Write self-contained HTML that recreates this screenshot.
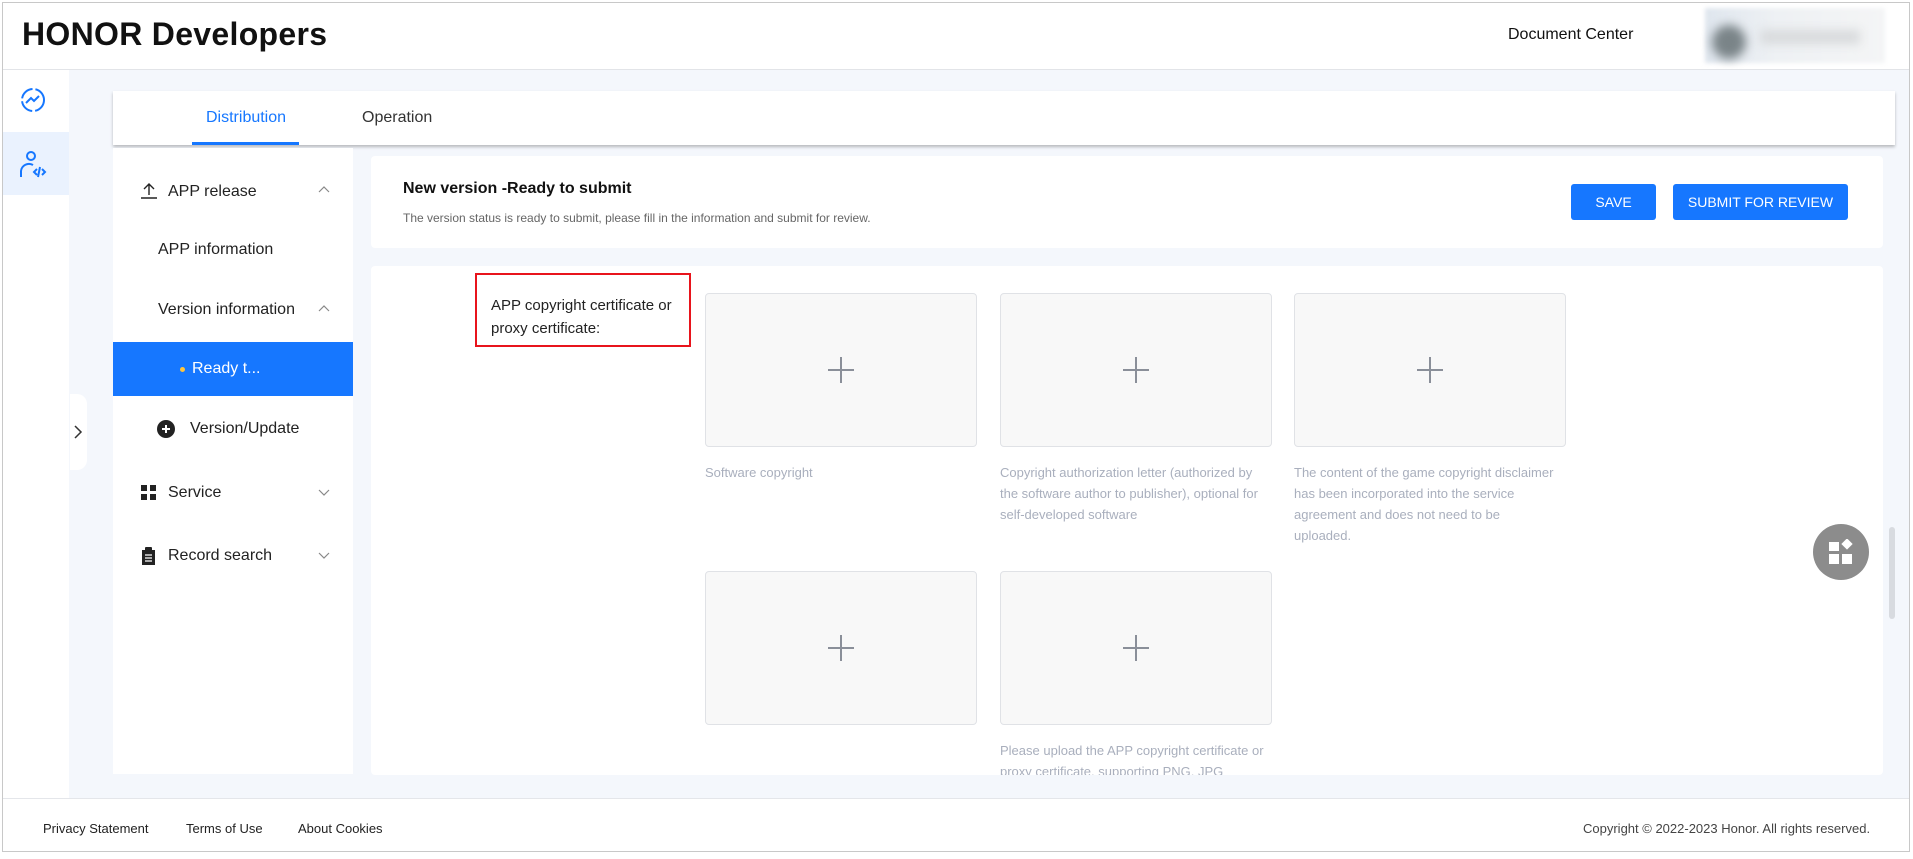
<!DOCTYPE html>
<html><head><meta charset="utf-8"><style>
*{box-sizing:border-box;margin:0;padding:0}
body{width:1913px;height:859px;overflow:hidden;background:#fff;font-family:"Liberation Sans",Arial,sans-serif;position:relative;color:#222}
.a{position:absolute}
.frame{left:2px;top:2px;width:1908px;height:850px;border:1px solid #c8c8c8}
.box{background:#f8f8f8;border:1px solid #e0e2e6;border-radius:4px}
.plus{position:absolute;left:50%;top:50%;width:26px;height:26px;margin:-13px 0 0 -13px}
.plus:before,.plus:after{content:"";position:absolute;background:#8a8f99}
.plus:before{left:12px;top:0;width:2px;height:26px}
.plus:after{top:12px;left:0;height:2px;width:26px}
.cap{color:#a9afbd;font-size:13px;line-height:21px;width:268px}
.mi{font-size:16px;color:#222}
.btn{background:#1677ff;color:#fff;font-size:14px;border-radius:3px;text-align:center;line-height:36px}
</style></head><body>
<div class="a frame"></div>
<div class="a" style="left:22px;top:16px;font-size:32px;font-weight:bold;color:#111;letter-spacing:0.3px">HONOR Developers</div>
<div class="a" style="left:1508px;top:26px;font-size:16px;color:#111">Document Center</div>
<div class="a" style="left:1705px;top:8px;width:180px;height:55px;background:linear-gradient(90deg,#dfe6ee,#eef1f4 40%,#f4f5f6);filter:blur(2px)"></div>
<div class="a" style="left:1712px;top:25px;width:34px;height:34px;border-radius:50%;background:#7a8488;filter:blur(5px)"></div>
<div class="a" style="left:1760px;top:30px;width:100px;height:14px;background:#d8dadc;filter:blur(5px)"></div>
<div class="a" style="left:3px;top:69px;width:1906px;height:1px;background:#e2e4e8"></div>
<div class="a" style="left:69px;top:70px;width:1840px;height:728px;background:#f4f7fc"></div>
<div class="a" style="left:3px;top:70px;width:66px;height:728px;background:#fff"></div>
<div class="a" style="left:3px;top:132px;width:66px;height:63px;background:#eaf2fe"></div>
<svg class="a" style="left:19px;top:86px" width="28" height="28" viewBox="0 0 28 28" fill="none" stroke="#1677ff" stroke-width="2"><circle cx="14" cy="14" r="11" stroke-dasharray="15 3"/><path d="M7 17l5-5 3 3 5-5"/></svg>
<svg class="a" style="left:19px;top:150px" width="30" height="30" viewBox="0 0 30 30" fill="none" stroke="#1677ff" stroke-width="2"><circle cx="12" cy="6" r="4"/><path d="M2 27v-6a8 8 0 0 1 12-6"/><path d="M18 19l-3 3 3 3M23 19l3 3-3 3M21 17l-2 10"/></svg>
<div class="a" style="left:70px;top:394px;width:17px;height:76px;background:#fff;border-radius:0 10px 10px 0"></div>
<svg class="a" style="left:73px;top:424px" width="10" height="16" viewBox="0 0 10 16" fill="none" stroke="#333" stroke-width="1.5"><path d="M2 2l6 6-6 6"/></svg>
<div class="a" style="left:113px;top:91px;width:1782px;height:54px;background:#fff;box-shadow:0 2px 3px rgba(0,0,0,.25)"></div>
<div class="a" style="left:206px;top:109px;font-size:16px;color:#1677ff">Distribution</div>
<div class="a" style="left:192px;top:142px;width:107px;height:3px;background:#1677ff"></div>
<div class="a" style="left:362px;top:109px;font-size:16px;color:#333">Operation</div>
<div class="a" style="left:113px;top:148px;width:240px;height:626px;background:#fff"></div>
<svg class="a" style="left:140px;top:181px" width="18" height="18" viewBox="0 0 18 18" fill="none" stroke="#222" stroke-width="1.4"><path d="M9 14V3M4 8l5-5 5 5M1 17h16"/></svg>
<div class="a mi" style="left:168px;top:183px">APP release</div>
<svg class="a" style="left:318px;top:185px" width="12" height="8" viewBox="0 0 12 8" fill="none" stroke="#888" stroke-width="1.2"><path d="M1 7l5-5 5 5"/></svg>
<div class="a mi" style="left:158px;top:241px">APP information</div>
<div class="a mi" style="left:158px;top:301px">Version information</div>
<svg class="a" style="left:318px;top:304px" width="12" height="8" viewBox="0 0 12 8" fill="none" stroke="#888" stroke-width="1.2"><path d="M1 7l5-5 5 5"/></svg>
<div class="a" style="left:113px;top:342px;width:240px;height:54px;background:#1677ff"></div>
<div class="a" style="left:180px;top:367px;width:5px;height:5px;border-radius:50%;background:#ffc53d"></div>
<div class="a" style="left:192px;top:360px;font-size:16px;color:#fff">Ready t...</div>
<svg class="a" style="left:157px;top:420px" width="18" height="18" viewBox="0 0 18 18"><circle cx="9" cy="9" r="9" fill="#222"/><path d="M9 5v8M5 9h8" stroke="#fff" stroke-width="2"/></svg>
<div class="a mi" style="left:190px;top:420px">Version/Update</div>
<svg class="a" style="left:141px;top:485px" width="16" height="16" viewBox="0 0 16 16" fill="#222"><rect x="0" y="0" width="6" height="6"/><rect x="9" y="0" width="6" height="6"/><rect x="0" y="9" width="6" height="6"/><rect x="9" y="9" width="6" height="6"/></svg>
<div class="a mi" style="left:168px;top:484px">Service</div>
<svg class="a" style="left:318px;top:489px" width="12" height="8" viewBox="0 0 12 8" fill="none" stroke="#888" stroke-width="1.2"><path d="M1 1l5 5 5-5"/></svg>
<svg class="a" style="left:141px;top:547px" width="16" height="18" viewBox="0 0 16 18"><rect x="1" y="3" width="13" height="15" fill="#222"/><rect x="4" y="0" width="7" height="4" rx="1" fill="#222"/><path d="M4 8h7M4 11h7M4 14h7" stroke="#fff" stroke-width="1.3"/></svg>
<div class="a mi" style="left:168px;top:547px">Record search</div>
<svg class="a" style="left:318px;top:552px" width="12" height="8" viewBox="0 0 12 8" fill="none" stroke="#888" stroke-width="1.2"><path d="M1 1l5 5 5-5"/></svg>
<div class="a" style="left:371px;top:156px;width:1512px;height:92px;background:#fff;border-radius:4px"></div>
<div class="a" style="left:403px;top:180px;font-size:16px;font-weight:bold;color:#111">New version -Ready to submit</div>
<div class="a" style="left:403px;top:211px;font-size:12px;color:#666">The version status is ready to submit, please fill in the information and submit for review.</div>
<div class="a btn" style="left:1571px;top:184px;width:85px">SAVE</div>
<div class="a btn" style="left:1673px;top:184px;width:175px">SUBMIT FOR REVIEW</div>
<div class="a" style="left:371px;top:266px;width:1512px;height:509px;background:#fff;border-radius:4px"></div>
<div class="a" style="left:475px;top:273px;width:216px;height:74px;border:2px solid #e8141c"></div>
<div class="a" style="left:491px;top:294px;font-size:15px;line-height:23px;color:#222">APP copyright certificate or<br>proxy certificate:</div>
<div class="a box" style="left:705px;top:293px;width:272px;height:154px"><div class="plus"></div></div>
<div class="a box" style="left:1000px;top:293px;width:272px;height:154px"><div class="plus"></div></div>
<div class="a box" style="left:1294px;top:293px;width:272px;height:154px"><div class="plus"></div></div>
<div class="a box" style="left:705px;top:571px;width:272px;height:154px"><div class="plus"></div></div>
<div class="a box" style="left:1000px;top:571px;width:272px;height:154px"><div class="plus"></div></div>
<div class="a cap" style="left:705px;top:462px">Software copyright</div>
<div class="a cap" style="left:1000px;top:462px">Copyright authorization letter (authorized by the software author to publisher), optional for self-developed software</div>
<div class="a cap" style="left:1294px;top:462px;width:262px">The content of the game copyright disclaimer has been incorporated into the service agreement and does not need to be uploaded.</div>
<div class="a" style="left:1000px;top:740px;height:35px;overflow:hidden"><div class="cap">Please upload the APP copyright certificate or proxy certificate, supporting PNG, JPG</div></div>
<div class="a" style="left:1889px;top:527px;width:6px;height:92px;border-radius:3px;background:#d8dbe0"></div>
<div class="a" style="left:1813px;top:524px;width:56px;height:56px;border-radius:50%;background:#8c8c8c"></div>
<svg class="a" style="left:1828px;top:539px" width="27" height="26" viewBox="0 0 27 26" fill="#fff"><rect x="1" y="3" width="10" height="9"/><rect x="1" y="15" width="10" height="10"/><rect x="14" y="15" width="10" height="10"/><rect x="15" y="1" width="8" height="8" transform="rotate(45 19 5)"/></svg>
<div class="a" style="left:3px;top:798px;width:1906px;height:1px;background:#e4e6ea"></div>
<div class="a" style="left:43px;top:821px;font-size:13px;color:#222">Privacy Statement</div>
<div class="a" style="left:186px;top:821px;font-size:13px;color:#222">Terms of Use</div>
<div class="a" style="left:298px;top:821px;font-size:13px;color:#222">About Cookies</div>
<div class="a" style="left:1583px;top:821px;font-size:13px;color:#444">Copyright © 2022-2023 Honor. All rights reserved.</div>
</body></html>
